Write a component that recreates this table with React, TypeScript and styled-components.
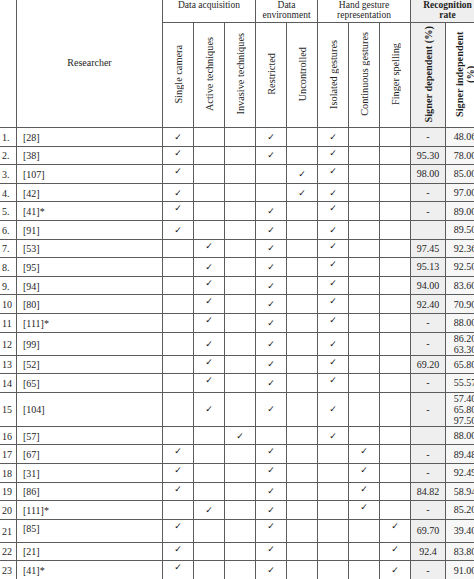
import styled, { createGlobalStyle } from "styled-components";

const GlobalStyle = createGlobalStyle`
  html, body {
    margin: 0;
    padding: 0;
    background: #ffffff;
    overflow: hidden;
  }
`;

type Mark = "" | "v" | "^";

interface RowData {
  ref: string;
  marks: Mark[];
  dep: string;
  indep: string;
  h: number;
  refTop?: boolean;
}

const COLS = [
  "Single camera",
  "Active techniques",
  "Invasive techniques",
  "Restricted",
  "Uncontrolled",
  "Isolated gestures",
  "Continuous gestures",
  "Finger spelling",
];

const H = 18.6;

// SC AT IT | R U | IG CG FS
const rows: RowData[] = [
  { ref: "[28]", marks: ["v", "", "", "v", "", "v", "", ""], dep: "-", indep: "48.06", h: H },
  { ref: "[38]", marks: ["^", "", "", "v", "", "^", "", ""], dep: "95.30", indep: "78.00", h: H },
  { ref: "[107]", marks: ["^", "", "", "", "v", "^", "", ""], dep: "98.00", indep: "85.00", h: H },
  { ref: "[42]", marks: ["v", "", "", "", "v", "v", "", ""], dep: "-", indep: "97.00", h: H },
  { ref: "[41]*", marks: ["^", "", "", "v", "", "^", "", ""], dep: "-", indep: "89.00", h: H },
  { ref: "[91]", marks: ["v", "", "", "v", "", "v", "", ""], dep: "", indep: "89.50", h: H },
  { ref: "[53]", marks: ["", "^", "", "v", "", "^", "", ""], dep: "97.45", indep: "92.36", h: H },
  { ref: "[95]", marks: ["", "v", "", "v", "", "^", "", ""], dep: "95.13", indep: "92.50", h: H },
  { ref: "[94]", marks: ["", "^", "", "v", "", "^", "", ""], dep: "94.00", indep: "83.60", h: H },
  { ref: "[80]", marks: ["", "^", "", "v", "", "^", "", ""], dep: "92.40", indep: "70.90", h: H },
  { ref: "[111]*", marks: ["", "^", "", "v", "", "^", "", ""], dep: "-", indep: "88.00", h: H },
  { ref: "[99]", marks: ["", "v", "", "v", "", "v", "", ""], dep: "-", indep: "86.20\n63.30", h: 23 },
  { ref: "[52]", marks: ["", "^", "", "v", "", "^", "", ""], dep: "69.20", indep: "65.80", h: H },
  { ref: "[65]", marks: ["", "^", "", "v", "", "^", "", ""], dep: "-", indep: "55.57", h: H },
  { ref: "[104]", marks: ["", "v", "", "v", "", "v", "", ""], dep: "-", indep: "57.40\n65.80\n97.50", h: 33 },
  { ref: "[57]", marks: ["", "", "v", "", "", "v", "", ""], dep: "", indep: "88.00", h: H },
  { ref: "[67]", marks: ["^", "", "", "^", "", "", "^", ""], dep: "-", indep: "89.48", h: H },
  { ref: "[31]", marks: ["^", "", "", "^", "", "", "^", ""], dep: "-", indep: "92.49", h: H },
  { ref: "[86]", marks: ["^", "", "", "v", "", "", "^", ""], dep: "84.82", indep: "58.94", h: H },
  { ref: "[111]*", marks: ["", "v", "", "v", "", "", "^", ""], dep: "-", indep: "85.20", h: H },
  { ref: "[85]", marks: ["^", "", "", "^", "", "", "", "^"], dep: "69.70", indep: "39.40", h: 23, refTop: true },
  { ref: "[21]", marks: ["^", "", "", "^", "", "", "", "^"], dep: "92.4", indep: "83.80", h: H },
  { ref: "[41]*", marks: ["^", "", "", "v", "", "", "", "v"], dep: "-", indep: "91.00", h: H },
];

const Table = styled.table`
  border-collapse: collapse;
  table-layout: fixed;
  width: 488px;
  margin: -3px 0 0 -4px;
  font-family: "Liberation Serif", "Times New Roman", serif;
  font-size: 10px;
  line-height: 1.1;
  color: #1e1e1e;

  td, th {
    border: 1px solid #5c5c5c;
    padding: 0;
  }
`;

const GroupHead = styled.th<{ $shade?: boolean }>`
  height: 22px;
  vertical-align: top;
  text-align: center;
  font-size: 9.5px;
  line-height: 10px;
  padding-top: 2px !important;
  font-weight: ${(p) => (p.$shade ? 700 : 400)};
  background: ${(p) => (p.$shade ? "#efefef" : "#ffffff")};
`;

const SideHead = styled.th`
  font-weight: 400;
  font-size: 10px;
  text-align: center;
  vertical-align: middle;
`;

const RotHead = styled.th<{ $shade?: string; $bold?: boolean }>`
  height: 104px;
  text-align: center;
  vertical-align: middle;
  font-weight: ${(p) => (p.$bold ? 700 : 400)};
  background: ${(p) => p.$shade ?? "#ffffff"};
`;

const RotText = styled.span`
  display: inline-block;
  writing-mode: vertical-rl;
  transform: rotate(180deg);
  max-height: 100px;
  font-size: 10.3px;
  line-height: 11px;
  text-align: center;
`;

const BodyRow = styled.tr<{ $h: number }>`
  height: ${(p) => p.$h}px;
`;

const NumCell = styled.td`
  padding-left: 5px !important;
  vertical-align: middle;
  padding-top: 1px !important;
`;

const RefCell = styled.td<{ $top?: boolean }>`
  padding-left: 6px !important;
  vertical-align: ${(p) => (p.$top ? "top" : "middle")};
  padding-top: ${(p) => (p.$top ? "3px" : "1px")} !important;
`;

const MarkCell = styled.td<{ $lift?: boolean }>`
  text-align: center;
  vertical-align: ${(p) => (p.$lift ? "top" : "middle")};
  padding-top: ${(p) => (p.$lift ? "1px" : "0")} !important;
  font-family: "DejaVu Sans", sans-serif;
  font-size: 9px;
  line-height: 10px;
  color: #111;
`;

const ValCell = styled.td<{ $bg: string }>`
  text-align: center;
  vertical-align: middle;
  background: ${(p) => p.$bg};
  white-space: pre-line;
  line-height: 11px;
`;

export default function App() {
  return (
    <>
      <GlobalStyle />
      <Table>
        <colgroup>
          <col style={{ width: 20 }} />
          <col style={{ width: 146 }} />
          {COLS.map((c) => (
            <col key={c} style={{ width: 31 }} />
          ))}
          <col style={{ width: 35 }} />
          <col style={{ width: 39 }} />
        </colgroup>
        <thead>
          <tr>
            <SideHead rowSpan={2} />
            <SideHead rowSpan={2}>Researcher</SideHead>
            <GroupHead colSpan={3}>Data acquisition</GroupHead>
            <GroupHead colSpan={2}>
              Data
              <br />
              environment
            </GroupHead>
            <GroupHead colSpan={3}>
              Hand gesture
              <br />
              representation
            </GroupHead>
            <GroupHead colSpan={2} $shade>
              Recognition
              <br />
              rate
            </GroupHead>
          </tr>
          <tr>
            {COLS.map((c) => (
              <RotHead key={c}>
                <RotText>{c}</RotText>
              </RotHead>
            ))}
            <RotHead $bold $shade="#efefef">
              <RotText>Signer dependent (%)</RotText>
            </RotHead>
            <RotHead $bold>
              <RotText>Signer independent (%)</RotText>
            </RotHead>
          </tr>
        </thead>
        <tbody>
          {rows.map((r, i) => (
            <BodyRow key={i} $h={r.h}>
              <NumCell>{i < 9 ? `${i + 1}.` : `${i + 1}`}</NumCell>
              <RefCell $top={r.refTop}>{r.ref}</RefCell>
              {r.marks.map((m, j) => (
                <MarkCell key={j} $lift={m === "^"}>
                  {m ? "✓" : ""}
                </MarkCell>
              ))}
              <ValCell $bg="#efefef">{r.dep}</ValCell>
              <ValCell $bg="#f7f7f7">{r.indep}</ValCell>
            </BodyRow>
          ))}
        </tbody>
      </Table>
    </>
  );
}
